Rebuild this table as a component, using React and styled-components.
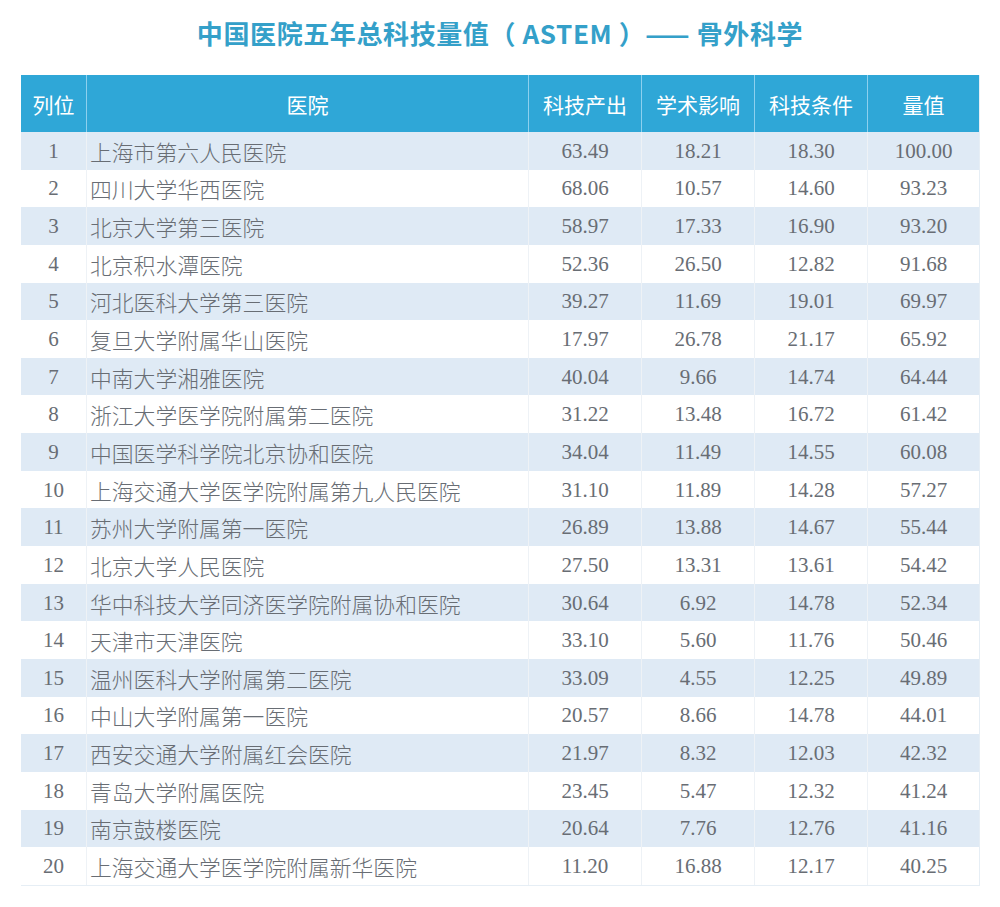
import React from "react";
import styled, { createGlobalStyle } from "styled-components";

const Global = createGlobalStyle`
  body {
    margin: 0;
    background: #fff;
    font-family: "Noto Sans CJK SC", "Noto Sans", sans-serif;
  }
`;

const Page = styled.div`
  width: 1000px;
  height: 907px;
  padding: 12px 21px 0 21px;
  box-sizing: border-box;
`;

const Title = styled.h1`
  margin: 0;
  height: 42px;
  line-height: 42px;
  text-align: center;
  font-size: 26px;
  font-weight: 700;
  color: #34a0c9;
  letter-spacing: 0.6px;
`;

const Table = styled.div`
  margin-top: 21px;
  width: 958px;
  border-right: 1px solid #e6eef5;
  border-bottom: 1px solid #e6eef5;
`;

const cols = "65px 442px 113px 113px 113px 1fr";

const HeadRow = styled.div`
  display: grid;
  grid-template-columns: ${cols};
  height: 57px;
  background: #2fa7d7;
`;

const HeadCell = styled.div`
  display: flex;
  align-items: center;
  justify-content: center;
  color: #fff;
  font-size: 21px;
  font-weight: 400;
  border-left: ${(p) => (p.first ? "none" : "1.5px solid #8dd0ee")};
`;

const Row = styled.div`
  display: grid;
  grid-template-columns: ${cols};
  height: 37.65px;
  background: ${(p) => (p.odd ? "#dfeaf5" : "#ffffff")};
`;

const Cell = styled.div`
  display: flex;
  align-items: center;
  justify-content: ${(p) => (p.left ? "flex-start" : "center")};
  padding-left: ${(p) => (p.left ? "3px" : "0")};
  padding-top: 1px;
  font-family: "Liberation Serif", "Noto Sans CJK SC", serif;
  font-weight: 300;
  font-size: ${(p) => (p.left ? "21.8px" : "21px")};
  color: #686d74;
  border-left: ${(p) => (p.first ? "none" : "1px solid #eef2f6")};
`;

const rows = [
  ["上海市第六人民医院", "63.49", "18.21", "18.30", "100.00"],
  ["四川大学华西医院", "68.06", "10.57", "14.60", "93.23"],
  ["北京大学第三医院", "58.97", "17.33", "16.90", "93.20"],
  ["北京积水潭医院", "52.36", "26.50", "12.82", "91.68"],
  ["河北医科大学第三医院", "39.27", "11.69", "19.01", "69.97"],
  ["复旦大学附属华山医院", "17.97", "26.78", "21.17", "65.92"],
  ["中南大学湘雅医院", "40.04", "9.66", "14.74", "64.44"],
  ["浙江大学医学院附属第二医院", "31.22", "13.48", "16.72", "61.42"],
  ["中国医学科学院北京协和医院", "34.04", "11.49", "14.55", "60.08"],
  ["上海交通大学医学院附属第九人民医院", "31.10", "11.89", "14.28", "57.27"],
  ["苏州大学附属第一医院", "26.89", "13.88", "14.67", "55.44"],
  ["北京大学人民医院", "27.50", "13.31", "13.61", "54.42"],
  ["华中科技大学同济医学院附属协和医院", "30.64", "6.92", "14.78", "52.34"],
  ["天津市天津医院", "33.10", "5.60", "11.76", "50.46"],
  ["温州医科大学附属第二医院", "33.09", "4.55", "12.25", "49.89"],
  ["中山大学附属第一医院", "20.57", "8.66", "14.78", "44.01"],
  ["西安交通大学附属红会医院", "21.97", "8.32", "12.03", "42.32"],
  ["青岛大学附属医院", "23.45", "5.47", "12.32", "41.24"],
  ["南京鼓楼医院", "20.64", "7.76", "12.76", "41.16"],
  ["上海交通大学医学院附属新华医院", "11.20", "16.88", "12.17", "40.25"],
];

const heads = ["列位", "医院", "科技产出", "学术影响", "科技条件", "量值"];

export default function App() {
  return (
    <Page>
      <Global />
      <Title>中国医院五年总科技量值（ ASTEM ）—— 骨外科学</Title>
      <Table>
        <HeadRow>
          {heads.map((h, i) => (
            <HeadCell key={h} first={i === 0}>
              {h}
            </HeadCell>
          ))}
        </HeadRow>
        {rows.map((r, i) => (
          <Row key={i} odd={i % 2 === 0}>
            <Cell first>{i + 1}</Cell>
            <Cell left>{r[0]}</Cell>
            {r.slice(1).map((v, j) => (
              <Cell key={j}>{v}</Cell>
            ))}
          </Row>
        ))}
      </Table>
    </Page>
  );
}
